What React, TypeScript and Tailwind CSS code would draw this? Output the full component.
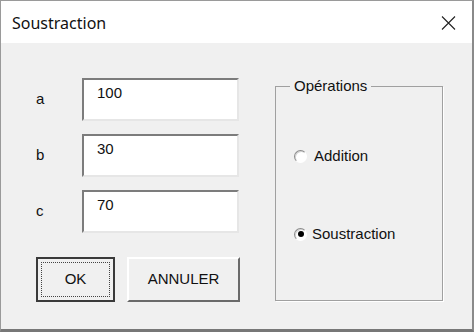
import React from "react";

const sunken =
  "border-2 border-t-[#7c7c7c] border-l-[#7c7c7c] border-b-[#e6e6e6] border-r-[#e6e6e6] bg-white";

function Champ({ label, valeur }: { label: string; valeur: string }) {
  return (
    <div className="flex items-center">
      <span className="w-[46px] text-[15px] text-[#111]">{label}</span>
      <div className={`w-[157px] h-[43px] pl-[13px] pt-[4px] text-[15px] leading-[18px] text-[#111] ${sunken}`}>
        {valeur}
      </div>
    </div>
  );
}

function Radio({ label, checked }: { label: string; checked?: boolean }) {
  return (
    <div className="flex items-center h-[18px]">
      <span className="relative w-[13px] h-[13px] rounded-full bg-white border-[1.5px] border-t-[#8a8a8a] border-l-[#8a8a8a] border-b-white border-r-white shadow-[inset_1px_1px_0_#d4d4d4] flex items-center justify-center">
        {checked && <span className="w-[6px] h-[6px] rounded-full bg-black" />}
      </span>
      <span className={`text-[15px] text-[#111] ${checked ? "ml-[5px]" : "ml-[7px]"}`}>{label}</span>
    </div>
  );
}

export default function App() {
  return (
    <div
      className="w-[474px] h-[332px] flex flex-col bg-[#f0f0f0] border border-[#9a9a9a] border-b-[3px] border-b-[#777] border-r-[2px] border-r-[#8a8a8a] overflow-hidden"
      style={{ fontFamily: '"Liberation Sans", Arial, sans-serif' }}
    >
      {/* barre de titre */}
      <div className="h-[42px] shrink-0 bg-white flex items-center justify-between pl-[11px] pr-[16px]">
        <span className="text-[16px] text-[#111] pt-[2px]" style={{ fontFamily: '"Noto Sans", sans-serif' }}>
          Soustraction
        </span>
        <svg width="15" height="14" viewBox="0 0 15 14" className="mt-[2px]">
          <path d="M1 0.5 L14 13.5 M14 0.5 L1 13.5" stroke="#222" strokeWidth="1.1" fill="none" />
        </svg>
      </div>

      <div className="flex flex-1">
        {/* colonne gauche */}
        <div className="pl-[35px] pt-[35px] flex flex-col gap-[13px]">
          <Champ label="a" valeur="100" />
          <Champ label="b" valeur="30" />
          <Champ label="c" valeur="70" />

          <div className="flex gap-[12px] mt-[11px]">
            <button className="relative w-[79px] h-[45px] bg-[#f0f0f0] border-2 border-[#3a3a3a] text-[15px] text-[#111]">
              <span className="absolute inset-[3px] border border-dotted border-[#444]" />
              OK
            </button>
            <button className="w-[113px] h-[45px] bg-[#f0f0f0] border-2 border-t-white border-l-white border-b-[#6a6a6a] border-r-[#6a6a6a] text-[15px] text-[#111]">
              ANNULER
            </button>
          </div>
        </div>

        {/* cadre Opérations */}
        <fieldset className="ml-[35px] mt-[34px] w-[168px] h-[224px] border border-[#a0a0a0] shadow-[1px_1px_0_#fff] px-[14px]">
          <legend className="px-[4px] text-[15px] leading-[18px] text-[#111]">Opérations</legend>
          <div className="flex flex-col pt-[52px] gap-[60px] pl-[4px]">
            <Radio label="Addition" />
            <Radio label="Soustraction" checked />
          </div>
        </fieldset>
      </div>
    </div>
  );
}
